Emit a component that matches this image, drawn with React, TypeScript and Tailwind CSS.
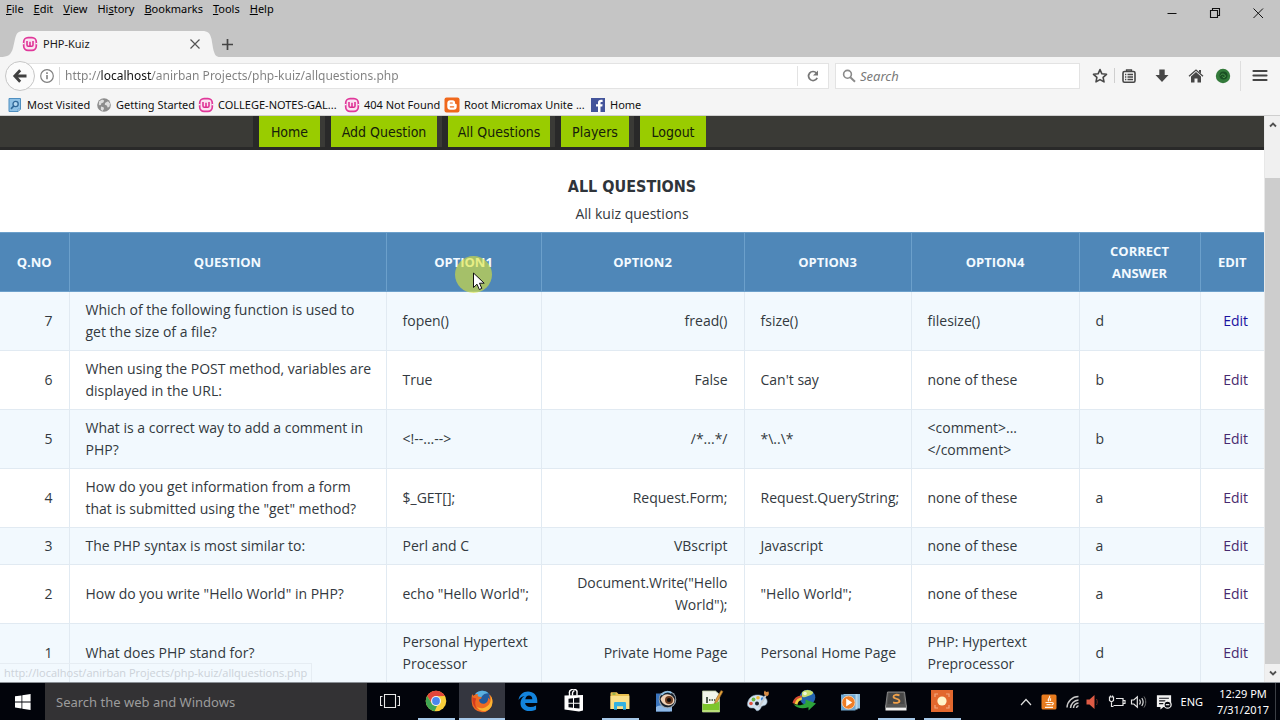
import React from "react";

type SvgProps = { children: React.ReactNode; box?: string; className?: string };

function Svg({ children, box = "0 0 24 24", className = "size-6" }: SvgProps) {
  return (
    <svg viewBox={box} className={`block shrink-0 ${className}`} fill="none" aria-hidden="true">
      {children}
    </svg>
  );
}

/* ---------- browser icons ---------- */

function WampIcon() {
  return (
    <Svg box="0 0 16 16" className="size-4">
      <rect x="1.7" y="1.7" width="12.6" height="12.6" rx="4.3" fill="#fbe3f1" stroke="#e0389a" strokeWidth="1.7" />
      <path d="M0.500 7.600h2M13.500 7.600h2" stroke="#f4f4f4" strokeWidth="1.200" />
      <path d="M5 5v4a1.300 1.300 0 0 0 1.300 1.300h3.400A1.300 1.300 0 0 0 11 9V5M8 5.800v4.200" stroke="#dd2a90" strokeWidth="1.500" />
    </Svg>
  );
}

function MostVisitedIcon() {
  return (
    <Svg box="0 0 16 16" className="size-4">
      <path d="M2 1.500h11.500V12L11 14.500H2z" fill="#8fc1e6" stroke="#4f8fc0" />
      <path d="M11 14.500V12h2.500z" fill="#d9ecf9" stroke="#4f8fc0" strokeWidth=".6" />
      <circle cx="8.600" cy="7" r="2.600" fill="#b6d8f0" stroke="#2f6798" strokeWidth="1.300" />
      <path d="M6.700 9 4 11.800" stroke="#2f6798" strokeWidth="1.700" />
    </Svg>
  );
}

function GlobeIcon() {
  return (
    <Svg box="0 0 16 16" className="size-4">
      <circle cx="8" cy="8" r="6.800" fill="#8c8c8c" />
      <path d="M3 4.500 6 2.600l2.200.8-.8 2-2 .8-.6 1.800-2 .2zM9 6l3-1.800 2 2.200-.4 3-1.800 1.400-1-2.400-2-.6zM5 9.400l2.600.8.4 1.800-1.600 2-1.600-1.600z" fill="#dedede" />
    </Svg>
  );
}

function BloggerIcon() {
  return (
    <Svg box="0 0 16 16" className="size-4">
      <rect x=".5" y=".5" width="15" height="15" rx="2" fill="#f0681c" />
      <path d="M6.300 3.300h2.200a2.600 2.600 0 0 1 2.600 2.600c0 .8.300 1 .9 1 .5 0 .7.300.7.800v2a3 3 0 0 1-3 3H6.300a3 3 0 0 1-3-3V6.300a3 3 0 0 1 3-3z" fill="#fff" />
      <path d="M6.300 6h2M6.300 9.800h3.400" stroke="#f0681c" strokeWidth="1.200" strokeLinecap="round" />
    </Svg>
  );
}

function FacebookIcon() {
  return (
    <Svg box="0 0 16 16" className="size-4">
      <rect x="1" y="1" width="14" height="14" fill="#43549b" />
      <path d="M8 15V9.600H6V7.300h2V5.600C8 3.600 9.200 2.700 11 2.700h1.600V5h-1.200c-.7 0-.9.300-.9.900v1.400h2.100l-.3 2.300h-1.800V15z" fill="#fff" />
    </Svg>
  );
}

function InfoIcon() {
  return (
    <Svg box="0 0 16 16" className="size-4">
      <circle cx="8" cy="8" r="6.300" stroke="#808080" strokeWidth="1.200" />
      <path d="M8 7v4.200M8 4.300v1.600" stroke="#808080" strokeWidth="1.600" />
    </Svg>
  );
}

/* ---------- taskbar icons ---------- */

function WindowsLogo() {
  return (
    <Svg box="0 0 16 16" className="size-4">
      <path d="M0 2.300 6.500 1.400v6.100H0zM7.300 1.300 15.600 0v7.500H7.300zM0 8.400h6.500v6.200L0 13.600zM7.300 8.400h8.300V16l-8.300-1.200z" fill="#fff" />
    </Svg>
  );
}

function TaskViewIcon() {
  return (
    <Svg box="0 0 20 16" className="h-4 w-5">
      <path d="M4.500 1.500h11v13h-11zM2.500 3.500h-2v9h2M17.500 3.500h2v9h-2" stroke="#e8e8e8" strokeWidth="1.100" />
    </Svg>
  );
}

function ChromeIcon() {
  return (
    <Svg className="size-6">
      <circle cx="12" cy="12" r="10.300" fill="#f9cf3b" />
      <path d="M3.100 6.900A10.300 10.300 0 0 1 20.900 6.900L12 7.200 7.900 14.400z" fill="#e2453a" />
      <path d="M3.100 6.900 7.800 14.600a5 5 0 0 0 5.200 2.300l-2.400 5.300A10.300 10.300 0 0 1 3.100 6.900z" fill="#3fa653" />
      <circle cx="12" cy="12" r="5" fill="#f3f3f3" />
      <circle cx="12" cy="12" r="3.900" fill="#4a86ec" />
    </Svg>
  );
}

function FirefoxIcon() {
  return (
    <Svg className="size-6">
      <circle cx="12.400" cy="10.500" r="9" fill="#235a9c" />
      <path d="M5.500 4.500C9 1 14.500.8 18.500 4.200 15.500 4.400 13 5 11.500 8L6 8z" fill="#5bb0df" />
      <path d="M2.200 5c.5 1 .9 1.400 1.400 1.800C4.500 5.600 6 5 8 5c-.7 1.300-.4 2 .4 2.500 1.100.6 2.400.2 3.400.9-.2 1.100-1.900 1.600-2.800 2.300.2 3.300 3.400 4.800 6 3.700 2.300-.9 3.400-3 3.100-5.600 1 .6 1.400 1.300 1.700 2 .3-2.200-.2-4-1.300-5.800 2.800 1.900 4.200 4.800 4 7.800a10.400 10.400 0 0 1-20.800.2c-.1-2.900-.3-5.100.5-8z" fill="#ee6a22" />
      <path d="M20.200 6c2 5.500-.7 11.500-6.700 13-2.500.6-5 .2-6.800-1.400 2.600 5 9 6 12.700 2.500 3.600-3.200 4.200-9.500.8-14.100z" fill="#f9b432" />
      <path d="M2.400 8c-.4 5 1.200 9.500 4.500 12C5 16.500 4.600 13 6.200 9.500 5 9.400 3.600 9 2.400 8z" fill="#d43b20" />
    </Svg>
  );
}

function EdgeIcon() {
  return (
    <Svg className="size-6">
      <path d="M2.500 11C3.400 5.500 7.200 2.500 12 2.500c5.500 0 9.300 3.800 9.300 9.200v2.200H9.100c.2 2.800 2.600 4 5.300 4 2 0 3.900-.5 5.700-1.500v4.100c-1.900 1-4.300 1.500-6.800 1.500-5.400 0-8.800-3.200-8.800-7.800 0-3 1.500-5.600 4-7.100-2.500.5-4.500 1.800-6 3.900zM9.300 10.200h7c0-2.400-1.200-3.700-3.300-3.700-2 0-3.300 1.400-3.700 3.700z" fill="#1384dd" />
    </Svg>
  );
}

function StoreIcon() {
  return (
    <Svg className="size-6">
      <path d="M2.500 6.500 21 6v15.500L17 22.500 2.500 20.500z" fill="#fff" />
      <path d="M7.500 7V4.500a4 3.500 0 0 1 7.500-2.300V6.500M10.500 6.500V4a3 3 0 0 1 2-2.500" stroke="#fff" strokeWidth="1.400" />
      <path d="M6.500 9.800 11 9.300v4.500H6.500zM12 9.200l5.500-.6v5.200H12zM6.500 14.800H11V18.800l-4.500-.5zM12 14.800h5.500v4.700l-5.500-.6z" fill="#0a0c14" />
    </Svg>
  );
}

function ExplorerIcon() {
  return (
    <Svg className="size-6">
      <path d="M2.500 4.500c0-.8.500-1.300 1.300-1.300h5L10.500 5H20c.8 0 1.300.5 1.300 1.300V20H2.500z" fill="#e9c04f" />
      <path d="M2.500 7h18.800v13H2.500z" fill="#fbe08a" />
      <path d="M6 20.800v-6.300c0-.9.500-1.400 1.400-1.400h9.200c.9 0 1.400.5 1.400 1.400v6.300h-3v-3.500H9v3.500z" fill="#35b1e1" />
      <path d="M4.500 5h3" stroke="#4ca64c" />
    </Svg>
  );
}

function EyeAppIcon() {
  return (
    <Svg className="size-6">
      <path d="M2 4.500h14v18H2z" fill="#3a74bd" />
      <path d="M2 18c4-3 12-1 16 0v4.500H2z" fill="#8eb8e6" />
      <circle cx="13.500" cy="10.500" r="8.800" fill="#9aa6b0" />
      <circle cx="13.500" cy="10.500" r="7.800" fill="#15202c" />
      <path d="M6.500 10c2-5 8-6.500 12-2.500 2 2 2.500 4 1.500 6-3.500 5-11.500 3.500-13.500-3.500z" fill="#efd0b4" />
      <circle cx="15" cy="11" r="4" fill="#6b3c20" />
      <circle cx="15" cy="11" r="2.100" fill="#100b09" />
      <path d="M7.500 6c3-3.500 7-4 10-2" stroke="#8fc4e8" strokeWidth="1.600" />
    </Svg>
  );
}

function NotepadIcon() {
  return (
    <Svg className="size-6">
      <path d="M2.500 2h13l4 3.500V23h-17z" fill="#f2f5ea" stroke="#b8c6a0" strokeWidth=".8" />
      <path d="M2.500 14.500c5 1 12 1 17-2.500v11h-17z" fill="#7dc62c" />
      <path d="M2.500 21h17v2h-17z" fill="#b9e07a" />
      <path d="M7 8v6M9 11h1.500M11.500 11H13M14 11h1" stroke="#344434" strokeWidth="1.700" />
      <path d="m14.500 14.500 1-3.500 5.500-9.500 2 1-5.500 10z" fill="#e2a23b" stroke="#8a5a22" strokeWidth=".6" />
    </Svg>
  );
}

function PaintIcon() {
  return (
    <Svg className="size-6">
      <path d="M11.500 6c5.500 0 10.500 3 9.500 7.500-1 4-4.500 2.500-5.700 4.500-1 1.800-2 4.500-5 3.500-1.500-3-3-2.500-5.300-2.500C1.500 18.500.8 15.500 2 12.500 3.500 8.500 6.500 6 11.500 6z" fill="#d3e3f1" stroke="#91a8bb" strokeWidth=".6" />
      <circle cx="5" cy="14.500" r="1.800" fill="#e0503e" />
      <circle cx="7.500" cy="10.500" r="1.900" fill="#6dba45" />
      <circle cx="12" cy="8.800" r="1.800" fill="#efb83d" />
      <circle cx="16.500" cy="10" r="1.700" fill="#3b83d2" />
      <circle cx="11" cy="14.500" r="2" fill="#1c2430" />
      <path d="m12 18 7-12 1.500 1-6.500 11.500z" fill="#c9cdd2" />
      <path d="M18.500 6C17.500 3.500 18 2.500 19 1.500l1 1.500 2.500-.5c.8 2.200.3 4-1.500 4.700z" fill="#d68a43" />
    </Svg>
  );
}

function DownloaderIcon() {
  return (
    <Svg className="size-6">
      <circle cx="15.500" cy="8.500" r="7.800" fill="#2463ae" />
      <path d="M10 3.500c3-3.500 8-3 11-.5.500 2-1.500 3-3.500 3.500-2.500.8-5 3-7.500 1z" fill="#c7de6e" />
      <circle cx="13" cy="4.500" r="1.800" fill="#eff7dd" />
      <path d="M.5 14C1.500 9.500 5 6.500 10 6.500L9.500 9C6.500 9.500 4.500 11 3.500 15z" fill="#d64c33" />
      <path d="M2.800 15C3.800 10.500 6.500 8.600 10 8.500l-.3 2.500c-2.500.6-4 2-4.200 4.700z" fill="#f2cf3d" />
      <path d="M1.500 15c3.500 2 8 1.500 12-.8v-3.700L24 14.500l-7.500 7v-3.200c-6 2-12 1-15-3.300z" fill="#2da43b" />
    </Svg>
  );
}

function MediaPlayerIcon() {
  return (
    <Svg className="size-6">
      <path d="M8 5h14v14.500H8z" fill="#8fbfdf" />
      <path d="M5.500 5h14v15.500h-14z" fill="#b9d7ea" />
      <path d="M3 5.500h14.500v16H3z" fill="#6fa8d3" />
      <circle cx="10.500" cy="13.500" r="6.500" fill="#ef7d26" stroke="#f9c79c" />
      <path d="m8.200 9.500 6 4-6 4z" fill="#fff" />
    </Svg>
  );
}

function SublimeIcon() {
  return (
    <Svg className="size-6">
      <path d="M1.500 16.500h21V21.500h-21z" fill="#f0f0f0" />
      <path d="M3.500 3h17l2 15.500h-21z" fill="#555" stroke="#8c8c8c" strokeWidth=".9" />
      <path d="M4.800 4h14.400l1 11H3.800z" fill="#474747" />
      <path d="M15.500 6.300c-2.500-1-6-.6-6 1.400 0 2.500 6 1.600 6 4.300 0 2.100-3.800 2.300-6.400 1.300" stroke="#f0a04a" strokeWidth="1.800" />
    </Svg>
  );
}

function RecorderIcon() {
  return (
    <Svg className="size-6">
      <rect x="1" y="1" width="22" height="22" fill="#e2682e" />
      <circle cx="12" cy="12" r="4.600" fill="#fff4c9" />
      <path d="M5 8V5h3M16 5h3v3M19 16v3h-3M8 19H5v-3" stroke="#f3a77f" strokeWidth="1.200" />
    </Svg>
  );
}

/* ---------- data ---------- */

const menus: [string, string, string][] = [
  ["", "F", "ile"],
  ["", "E", "dit"],
  ["", "V", "iew"],
  ["Hi", "s", "tory"],
  ["", "B", "ookmarks"],
  ["", "T", "ools"],
  ["", "H", "elp"],
];

const bookmarks = [
  { label: "Most Visited", icon: <MostVisitedIcon />, width: "w-[89px]" },
  { label: "Getting Started", icon: <GlobeIcon />, width: "w-[102px]" },
  { label: "COLLEGE-NOTES-GAL...", icon: <WampIcon />, width: "w-[146px]" },
  { label: "404 Not Found", icon: <WampIcon />, width: "w-[100px]" },
  { label: "Root Micromax Unite ...", icon: <BloggerIcon />, width: "w-[146px]" },
  { label: "Home", icon: <FacebookIcon />, width: "w-[60px]" },
];

const navItems = [
  { label: "Home", width: "w-[61px]" },
  { label: "Add Question", width: "w-[106px]" },
  { label: "All Questions", width: "w-[102px]" },
  { label: "Players", width: "w-[68px]" },
  { label: "Logout", width: "w-[66px]" },
];

const headings = ["Q.NO", "QUESTION", "OPTION1", "OPTION2", "OPTION3", "OPTION4", "CORRECT ANSWER", "EDIT"];

const questions = [
  { no: 7, text: "Which of the following function is used to\nget the size of a file?", options: ["fopen()", "fread()", "fsize()", "filesize()"], answer: "d", visited: false },
  { no: 6, text: "When using the POST method, variables are\ndisplayed in the URL:", options: ["True", "False", "Can't say", "none of these"], answer: "b", visited: true },
  { no: 5, text: "What is a correct way to add a comment in\nPHP?", options: ["<!--...-->", "/*...*/", "*\\..\\*", "<comment>...\n</comment>"], answer: "b", visited: true },
  { no: 4, text: "How do you get information from a form\nthat is submitted using the \"get\" method?", options: ["$_GET[];", "Request.Form;", "Request.QueryString;", "none of these"], answer: "a", visited: true },
  { no: 3, text: "The PHP syntax is most similar to:", options: ["Perl and C", "VBscript", "Javascript", "none of these"], answer: "a", visited: true },
  { no: 2, text: "How do you write \"Hello World\" in PHP?", options: ["echo \"Hello World\";", "Document.Write(\"Hello\nWorld\");", "\"Hello World\";", "none of these"], answer: "a", visited: true },
  { no: 1, text: "What does PHP stand for?", options: ["Personal Hypertext\nProcessor", "Private Home Page", "Personal Home Page", "PHP: Hypertext\nPreprocessor"], answer: "d", visited: true },
];

const apps = [
  { name: "Task View", icon: <TaskViewIcon />, state: "idle" },
  { name: "Chrome", icon: <ChromeIcon />, state: "open" },
  { name: "Firefox", icon: <FirefoxIcon />, state: "active" },
  { name: "Edge", icon: <EdgeIcon />, state: "idle" },
  { name: "Store", icon: <StoreIcon />, state: "idle" },
  { name: "File Explorer", icon: <ExplorerIcon />, state: "open" },
  { name: "Webcam", icon: <EyeAppIcon />, state: "idle" },
  { name: "Notepad++", icon: <NotepadIcon />, state: "idle" },
  { name: "Paint", icon: <PaintIcon />, state: "idle" },
  { name: "Download Manager", icon: <DownloaderIcon />, state: "idle" },
  { name: "Media Player", icon: <MediaPlayerIcon />, state: "idle" },
  { name: "Sublime Text", icon: <SublimeIcon />, state: "open" },
  { name: "Recorder", icon: <RecorderIcon />, state: "open" },
];

/* ---------- sections ---------- */

function TitleBar() {
  return (
    <header className="flex h-[57px] shrink-0 justify-between bg-[#c5c5c5]">
      <div className="flex flex-col justify-between">
        <nav className="flex h-[18px] items-center gap-[10px] pl-[6px] text-[11px] text-black" aria-label="Menu">
          {menus.map(([pre, key, post]) => (
            <button key={key + post} className="leading-4">
              {pre}
              <span className="underline">{key}</span>
              {post}
            </button>
          ))}
        </nav>
        <div className="flex h-[26px] items-center">
          <div className="relative flex h-[26px] w-[220px] items-center">
            <svg viewBox="0 0 220 26" className="absolute inset-0 h-[26px] w-[220px]" aria-hidden="true">
              <path d="M0 26C8 26 11 24 13 17L15 8C16.500 2 18 0 24 0H202C208 0 210 2 211.500 8L213 17C214.500 24 216 26 220 26Z" fill="#f5f5f5" />
            </svg>
            <div className="relative flex w-full items-center pl-[22px] pr-[19px]">
              <WampIcon />
              <span className="grow pl-[5px] text-[11px] leading-4 text-[#1a1a1a]">PHP-Kuiz</span>
              <button aria-label="Close tab">
                <Svg box="0 0 12 12" className="size-3">
                  <path d="m1.500 1.500 9 9m0-9-9 9" stroke="#555" strokeWidth="1.200" />
                </Svg>
              </button>
            </div>
          </div>
          <button aria-label="New tab">
            <Svg box="0 0 14 14" className="size-3.5">
              <path d="M7.500 2v11M2 7.500h11" stroke="#444" strokeWidth="1.700" />
            </Svg>
          </button>
        </div>
      </div>
      <div className="flex h-[26px] items-center gap-[31px] pr-4">
        <button aria-label="Minimize">
          <Svg box="0 0 12 12" className="size-3"><path d="M1.500 6.500h9" stroke="#111" /></Svg>
        </button>
        <button aria-label="Restore">
          <Svg box="0 0 12 12" className="size-3">
            <path d="M1.500 3.500h7v7h-7zM3.500 3.500v-2h7v7h-2" stroke="#111" strokeWidth="1.100" />
          </Svg>
        </button>
        <button aria-label="Close">
          <Svg box="0 0 12 12" className="size-3"><path d="m1.500 1.500 9.500 9.500m0-9.500-9.500 9.500" stroke="#111" /></Svg>
        </button>
      </div>
    </header>
  );
}

function Toolbar() {
  return (
    <div className="flex h-[37px] shrink-0 items-center bg-[#f5f5f5] pl-[5px]">
      <button aria-label="Back" className="z-10 grid size-[30px] shrink-0 place-items-center rounded-full border border-[#c6c6c6] bg-[#fbfbfb]">
        <Svg box="0 0 16 16" className="size-4">
          <path d="M8.200 2.200 2.800 8l5.400 5.800M3.500 8H14.500" stroke="#404040" strokeWidth="2.800" />
        </Svg>
      </button>
      <div className="-ml-2 flex h-[26px] grow items-center border border-[#e3e3e3] bg-white pl-[11px]">
        <InfoIcon />
        <div className="ml-1 h-[18px] w-px bg-[#d8d8d8]" />
        <input
          aria-label="Address"
          defaultValue="http://localhost/anirban Projects/php-kuiz/allquestions.php"
          className="ml-[5px] min-w-0 grow bg-[linear-gradient(90deg,#808080_36px,#111_36px,#111_87px,#808080_87px)] bg-clip-text text-xs leading-5 text-transparent outline-none"
        />
        <button aria-label="Reload" className="grid h-5 w-[31px] shrink-0 place-items-center border-l border-[#e3e3e3]">
          <Svg box="0 0 14 14" className="size-3.5">
            <path d="M11.200 8.800A4.500 4.500 0 1 1 10.400 4" stroke="#777" strokeWidth="1.700" />
            <path d="M12 1.500V6.500H7z" fill="#777" />
          </Svg>
        </button>
      </div>
      <label className="ml-[6px] flex h-[26px] w-[245px] shrink-0 items-center gap-1 border border-[#e3e3e3] bg-white pl-[6px]">
        <Svg box="0 0 14 14" className="size-3.5">
          <circle cx="5.500" cy="5.300" r="3.900" stroke="#8a8a8a" strokeWidth="1.600" />
          <path d="m8.300 8.300 4.700 4.400" stroke="#8a8a8a" strokeWidth="2" />
        </Svg>
        <input aria-label="Search" placeholder="Search" className="min-w-0 grow text-[13px] leading-5 italic outline-none placeholder:text-[#7a7a7a]" />
      </label>
      <div className="ml-3 flex shrink-0 items-center text-[#474747]">
        <button aria-label="Bookmark this page">
          <Svg box="0 0 16 16" className="size-4">
            <path d="m8 1.600 1.900 4.200 4.600.5-3.400 3.100.9 4.500L8 11.600l-4 2.300.9-4.500L1.500 6.300l4.600-.5z" stroke="currentColor" strokeWidth="1.600" strokeLinejoin="round" />
          </Svg>
        </button>
        <div className="mx-[6px] h-[15px] w-px bg-[#cfcfcf]" />
        <button aria-label="Show bookmarks">
          <Svg box="0 0 16 16" className="size-4">
            <rect x="2" y="3.500" width="12" height="10.800" rx="1.500" stroke="currentColor" strokeWidth="1.600" />
            <path d="M5.500 3.500V2h5v1.500M4 6.500h1.300M6.500 6.500H12M4 9h1.300M6.500 9H12M4 11.500h1.300M6.500 11.500H12" stroke="currentColor" strokeWidth="1.300" />
          </Svg>
        </button>
        <button aria-label="Downloads" className="ml-[17px]">
          <Svg box="0 0 16 16" className="size-4">
            <path d="M5.300 1.500h5.400V7h3.800L8 14 1.500 7h3.800z" fill="currentColor" />
          </Svg>
        </button>
        <button aria-label="Home page" className="ml-[18px]">
          <Svg box="0 0 16 16" className="size-4">
            <path d="M1 8.300 8 2l7 6.300" stroke="currentColor" strokeWidth="1.300" />
            <path d="M3 8.500 8 4l5 4.500V14.500H9.500V10.500h-3v4H3zM11 2h2v3.500l-2-1.700z" fill="currentColor" />
          </Svg>
        </button>
        <button aria-label="Extension" className="ml-[11px]">
          <Svg box="0 0 16 16" className="size-4">
            <circle cx="8" cy="8" r="7.200" fill="#347a3b" />
            <circle cx="8.500" cy="7.500" r="4" fill="#1b5124" />
            <path d="M5.500 7.500C6.500 5.500 9 5.500 10.500 8c-.5 2-2.500 2-3 .5" stroke="#4d9a4e" strokeWidth="1" />
          </Svg>
        </button>
        <div className="ml-[9px] h-[30px] w-px bg-[#dedede]" />
      </div>
      <button aria-label="Open menu" className="mr-3 ml-[11px] shrink-0">
        <Svg box="0 0 16 16" className="size-4">
          <path d="M1.500 3h13M1.500 7.500h13M1.500 12h13" stroke="#444" strokeWidth="2.200" strokeLinecap="round" />
        </Svg>
      </button>
    </div>
  );
}

function BookmarksBar() {
  return (
    <nav aria-label="Bookmarks" className="flex h-[22px] shrink-0 items-center border-b border-[#cfcfcf] bg-[#f5f5f5] pl-[7px] text-[11px] text-[#111]">
      {bookmarks.map((b) => (
        <a key={b.label} href="#" className={`flex shrink-0 items-center gap-1 whitespace-nowrap ${b.width}`}>
          {b.icon}
          <span className="leading-4">{b.label}</span>
        </a>
      ))}
    </nav>
  );
}

function QuestionTable() {
  return (
    <table className="w-full table-fixed border-collapse text-sm leading-[22px] text-[#333940]">
      <colgroup>
        <col className="w-[69px]" />
        <col />
        <col className="w-[155px]" />
        <col className="w-[203px]" />
        <col className="w-[167px]" />
        <col className="w-[168px]" />
        <col className="w-[121px]" />
        <col className="w-[64px]" />
      </colgroup>
      <thead>
        <tr className="bg-[#4f87b8] text-[#f3faff]">
          {headings.map((h) => (
            <th key={h} className="border border-[#6ca0cb] px-3 py-[7px] text-[13px] font-bold first:border-l-0 last:border-r-0">{h}</th>
          ))}
        </tr>
      </thead>
      <tbody>
        {questions.map((q) => (
          <tr key={q.no} className="whitespace-pre odd:bg-[#f2f9fe] even:bg-white [&>td]:border [&>td]:border-[#e1eaf2] [&>td]:px-4 [&>td]:py-[7px] [&>td:first-child]:border-l-0 [&>td:last-child]:border-r-0">
            <td className="text-right">{q.no}</td>
            <td>{q.text}</td>
            {q.options.map((o, i) => (
              <td key={i} className={i === 1 ? "text-right" : "text-left"}>{o}</td>
            ))}
            <td>{q.answer}</td>
            <td className="text-right">
              <a href="#" className={q.visited ? "text-[#472a6e]" : "text-[#1a12a0]"}>Edit</a>
            </td>
          </tr>
        ))}
      </tbody>
    </table>
  );
}

function Page() {
  return (
    <div className="relative flex min-h-0 grow bg-white">
      <main className="min-w-0 grow overflow-hidden font-['Open_Sans','Noto_Sans',sans-serif]">
        <nav aria-label="Site" className="flex h-[34px] border-b-3 border-[#292929] bg-[#3a3a36] pl-[253px]">
          {navItems.map((n) => (
            <div key={n.label} className="flex bg-[#3a3a36]">
              <div className="w-[6px] bg-[#292929]" />
              <a href="#" className={`grid place-items-center bg-[#99cc00] font-['DejaVu_Sans_Condensed','DejaVu_Sans',sans-serif] text-sm leading-5 whitespace-nowrap text-[#16200a] ${n.width}`}>{n.label}</a>
              <div className="w-[5px]" />
            </div>
          ))}
        </nav>
        <div className="flex flex-col items-center pt-[25px] pb-[7px] text-[#33383d]">
          <h1 className="font-['DejaVu_Sans_Condensed','DejaVu_Sans',sans-serif] text-base leading-6 font-bold text-[#2f343a]">ALL QUESTIONS</h1>
          <p className="pt-1 text-sm leading-[22px]">All kuiz questions</p>
        </div>
        <QuestionTable />
      </main>
      <div className="flex w-4 shrink-0 flex-col items-center justify-between border-l border-[#e8e8e8] bg-[#f0f0f0]">
        <Svg box="0 0 10 10" className="my-1 size-2.5"><path d="m2 6.500 3-3 3 3" stroke="#505050" strokeWidth="1.800" /></Svg>
        <div className="mt-11 w-full grow bg-[#cdcdcd]" />
        <Svg box="0 0 10 10" className="my-1 size-2.5"><path d="m2 3.500 3 3 3-3" stroke="#505050" strokeWidth="1.800" /></Svg>
      </div>
      <div className="absolute bottom-0 left-0 border-t border-r border-[#e6edf3] pr-1 pl-1 font-['Open_Sans','Noto_Sans',sans-serif] text-[11px] leading-[18px] text-[#ccd2d9]">
        http://localhost/anirban Projects/php-kuiz/allquestions.php
      </div>
      <div className="absolute top-[140px] left-[455px] size-[37px] rounded-full bg-[#dfe633]/60" />
      <svg viewBox="0 0 13 20" className="absolute top-[156px] left-[472px] h-5 w-[13px]" aria-hidden="true">
        <path d="M1.500 1v14.500l3.500-3.300 2.300 5.300 2.500-1.100-2.300-5.200h4.700z" fill="#fff" stroke="#111" />
      </svg>
    </div>
  );
}

function Taskbar() {
  return (
    <footer className="flex h-[38px] shrink-0 items-center border-t border-[#8b9096] bg-[#02040b] text-white">
      <button aria-label="Start" className="grid h-full w-[45px] shrink-0 place-items-center">
        <WindowsLogo />
      </button>
      <input aria-label="Search the web and Windows" placeholder="Search the web and Windows" className="h-full w-[322px] shrink-0 bg-[#333234] px-[11px] text-[13px] outline-none placeholder:text-[#9c9c9c]" />
      {apps.map((a) => (
        <button
          key={a.name}
          aria-label={a.name}
          className={`flex h-full w-[46px] shrink-0 flex-col items-center ${a.state === "active" ? "bg-[#34363f]" : ""}`}
        >
          <span className="grid grow place-items-center">{a.icon}</span>
          <span className={`h-[2px] ${a.state === "active" ? "w-full bg-[#a6c8e8]" : a.state === "open" ? "w-[37px] bg-[#a6c8e8]" : "w-0"}`} />
        </button>
      ))}
      <div className="flex h-full grow items-center justify-end pr-1">
        <Svg box="0 0 12 12" className="size-3"><path d="m1 9 5-5.500L11 9" stroke="#e0e0e0" strokeWidth="1.200" /></Svg>
        <Svg box="0 0 16 16" className="ml-[9px] size-4">
          <rect x=".5" y=".5" width="15" height="15" rx="1.500" fill="#e87b1e" />
          <path d="M8.500 1.800c1.500 2-2.800 3-.8 5.500M10 4.500C8.500 5.500 9 6 9.500 7M4.500 8.500h6.500c2 0 1.500 2-.5 2.300M5.500 10.700h4.200M4 13.300h8" stroke="#fff5e8" strokeWidth="1.200" />
        </Svg>
        <Svg box="0 0 16 16" className="ml-2 size-4">
          <path d="M2 13.500A11.500 11.500 0 0 1 13.500 2.500M5.500 14A8.500 8.500 0 0 1 13.500 6M8.500 14a5.500 5.500 0 0 1 5-5M11.500 14a2.500 2.500 0 0 1 2-2.200" stroke="#c8c8c8" strokeWidth="1.500" />
        </Svg>
        <Svg box="0 0 16 16" className="ml-1 size-4">
          <path d="M1.500 5.500h3l5-4.500v14l-5-4.500h-3z" fill="#de5b45" />
          <path d="M11.500 5c1 1.800 1 4.200 0 6" stroke="#6c2c22" />
        </Svg>
        <Svg box="0 0 18 14" className="ml-[7px] h-3.5 w-[18px]">
          <path d="M5.500 10.500h9.500v-7H8M15.500 5.500h1.500v3h-1.500M1.500 2h4v3.500l-2 1.500-2-1.500zM2.500 2V.5M4.500 2V.5M3.500 7v4.500h2" stroke="#e6e6e6" strokeWidth="1.200" />
        </Svg>
        <Svg box="0 0 18 16" className="ml-1 h-4 w-[18px]">
          <path d="M1.500 6h2.300L7.300 2.800v10.400L3.800 10H1.500z" stroke="#e6e6e6" strokeWidth="1.200" />
          <path d="M9.500 5.500c1 1.500 1 3.500 0 5M11.800 4c1.700 2.500 1.700 5.500 0 8" stroke="#dadada" strokeWidth="1.200" />
          <path d="M14 2.500c2.300 3.300 2.300 7.700 0 11" stroke="#777" />
        </Svg>
        <Svg box="0 0 18 18" className="ml-2 size-4">
          <path d="M1 1.500h16v13H8.500L5 17.500v-3H1z" fill="#f2f2f2" />
          <path d="M3.500 4.800h11M3.500 7.800h7M3.500 10.800h5" stroke="#14161c" strokeWidth="1.300" />
          <circle cx="13" cy="12" r="4" fill="#02040b" stroke="#f2f2f2" strokeWidth="1.400" />
          <path d="M11 12h4" stroke="#f2f2f2" strokeWidth="1.400" />
        </Svg>
        <span className="ml-[9px] text-[11px] leading-4">ENG</span>
        <time className="ml-3 w-[56px] text-center text-[11px] leading-4 whitespace-nowrap">
          12:29 PM
          <br />
          7/31/2017
        </time>
        <div className="ml-1 h-full w-px bg-[#3c3f45]" />
      </div>
    </footer>
  );
}

export default function App() {
  return (
    <div className="flex h-screen flex-col overflow-hidden font-['Noto_Sans','Open_Sans',sans-serif]">
      <TitleBar />
      <Toolbar />
      <BookmarksBar />
      <Page />
      <Taskbar />
    </div>
  );
}
